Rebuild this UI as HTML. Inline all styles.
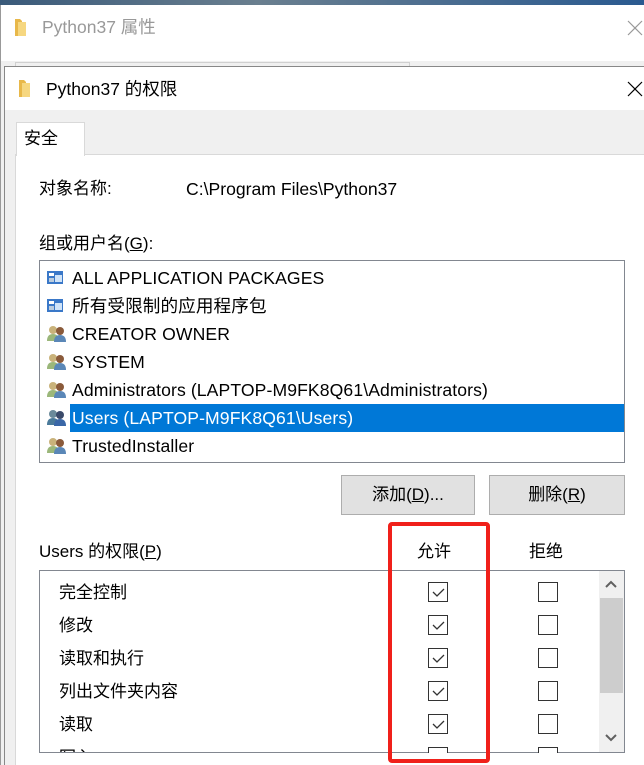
<!DOCTYPE html>
<html><head><meta charset="utf-8"><style>
*{margin:0;padding:0;box-sizing:border-box}
body{width:644px;height:765px;overflow:hidden;background:#f0f0f0;font-family:"Liberation Sans","Noto Sans CJK SC","Microsoft YaHei",sans-serif;position:relative;font-size:17px;color:#000}
.a{position:absolute}
.t{position:absolute;white-space:nowrap;line-height:20px}
.row{position:absolute;left:1px;width:583px;height:28px}
.row span{position:absolute;left:31px;top:4px;line-height:20px;white-space:nowrap;font-size:17.6px;letter-spacing:0.1px}
.cb{position:absolute;width:20px;height:20px;border:1px solid #333;background:#fff}
</style></head><body>
<div class="a" style="left:0;top:0;width:644px;height:5px;background:linear-gradient(90deg,#3a5a7a,#6a7f8f 40%,#2a5a90)"></div>
<div class="a" style="left:0;top:5px;width:644px;height:760px;background:#f0f0f0;border-left:1px solid #999"></div>
<div class="a" style="left:1px;top:5px;width:643px;height:56px;background:#fff"></div>
<svg class="a" style="left:13px;top:16px" width="18" height="22"><path d="M2 3h5l2 2v15H2z" fill="#e8b84a"/><path d="M5 6h8v14H5z" fill="#f6d780"/></svg>
<div class="t" style="left:42px;top:17px;color:#999;font-size:17.5px">Python37 属性</div>
<svg class="a" style="left:624px;top:20px" width="20" height="16"><path d="M4 1l14 14M18 1L4 15" stroke="#999" stroke-width="1.2"/></svg>
<div class="a" style="left:15px;top:62px;width:395px;height:6px;border:1px solid #d0d0d0;border-bottom:none"></div>
<div class="a" style="left:4px;top:66px;width:640px;height:699px;background:#f0f0f0;border:1px solid #888;border-right:none;border-bottom:none"></div>
<div class="a" style="left:5px;top:67px;width:639px;height:43px;background:#fff"></div>
<svg class="a" style="left:17px;top:77px" width="18" height="22"><path d="M2 3h5l2 2v15H2z" fill="#e8b84a"/><path d="M5 6h8v14H5z" fill="#f6d780"/></svg>
<div class="t" style="left:46px;top:79px;font-size:17.5px">Python37 的权限</div>
<svg class="a" style="left:624px;top:81px" width="20" height="16"><path d="M4 1l14 14M18 1L4 15" stroke="#000" stroke-width="1.2"/></svg>
<div class="a" style="left:15px;top:154px;width:629px;height:611px;background:#fff;border-left:1px solid #d9d9d9;border-top:1px solid #d9d9d9"></div>
<div class="a" style="left:16px;top:122px;width:69px;height:34px;background:#fff;border:1px solid #d9d9d9;border-bottom:none"></div>
<div class="t" style="left:24px;top:129px">安全</div>
<div class="t" style="left:39px;top:179px">对象名称:</div>
<div class="t" style="left:186px;top:179px;font-size:17.6px">C:\Program Files\Python37</div>
<div class="t" style="left:39px;top:234px">组或用户名(<u>G</u>):</div>
<div class="a" style="left:39px;top:260px;width:586px;height:203px;border:1px solid #828790;background:#fff">
<div class="row" style="top:3px"><svg class="a" style="left:5px;top:5px" width="20" height="18"><rect x="1" y="2" width="16" height="13" fill="#3a78c8"/><rect x="3" y="4" width="5" height="3" fill="#fff"/><rect x="9" y="6" width="7" height="7" fill="#cfe3f8"/><rect x="3" y="9" width="5" height="4" fill="#bcd"/></svg><span>ALL APPLICATION PACKAGES</span></div>
<div class="row" style="top:31px"><svg class="a" style="left:5px;top:5px" width="20" height="18"><rect x="1" y="2" width="16" height="13" fill="#3a78c8"/><rect x="3" y="4" width="5" height="3" fill="#fff"/><rect x="9" y="6" width="7" height="7" fill="#cfe3f8"/><rect x="3" y="9" width="5" height="4" fill="#bcd"/></svg><span>所有受限制的应用程序包</span></div>
<div class="row" style="top:59px"><svg class="a" style="left:5px;top:5px" width="22" height="18"><circle cx="7" cy="5" r="4" fill="#c9b27a"/><path d="M1 16q0-7 6-7t6 7z" fill="#9bb77a"/><circle cx="14" cy="6" r="4" fill="#8a5a3a"/><path d="M8 17q0-7 6-7t6 7z" fill="#5a87b7"/></svg><span>CREATOR OWNER</span></div>
<div class="row" style="top:87px"><svg class="a" style="left:5px;top:5px" width="22" height="18"><circle cx="7" cy="5" r="4" fill="#c9b27a"/><path d="M1 16q0-7 6-7t6 7z" fill="#9bb77a"/><circle cx="14" cy="6" r="4" fill="#8a5a3a"/><path d="M8 17q0-7 6-7t6 7z" fill="#5a87b7"/></svg><span>SYSTEM</span></div>
<div class="row" style="top:115px"><svg class="a" style="left:5px;top:5px" width="22" height="18"><circle cx="7" cy="5" r="4" fill="#c9b27a"/><path d="M1 16q0-7 6-7t6 7z" fill="#9bb77a"/><circle cx="14" cy="6" r="4" fill="#8a5a3a"/><path d="M8 17q0-7 6-7t6 7z" fill="#5a87b7"/></svg><span>Administrators (LAPTOP-M9FK8Q61\Administrators)</span></div>
<div class="row" style="top:143px"><svg class="a" style="left:5px;top:5px" width="22" height="18"><circle cx="7" cy="5" r="4" fill="#6a8a9a"/><path d="M1 16q0-7 6-7t6 7z" fill="#4a7a9a"/><circle cx="14" cy="6" r="4" fill="#3a4a6a"/><path d="M8 17q0-7 6-7t6 7z" fill="#3a67a7"/></svg><div class="a" style="left:29px;top:0;width:554px;height:28px;background:#0078d7"></div><span style="color:#fff">Users (LAPTOP-M9FK8Q61\Users)</span></div>
<div class="row" style="top:171px"><svg class="a" style="left:5px;top:5px" width="22" height="18"><circle cx="7" cy="5" r="4" fill="#c9b27a"/><path d="M1 16q0-7 6-7t6 7z" fill="#9bb77a"/><circle cx="14" cy="6" r="4" fill="#8a5a3a"/><path d="M8 17q0-7 6-7t6 7z" fill="#5a87b7"/></svg><span>TrustedInstaller</span></div>
</div>
<div class="a" style="left:341px;top:475px;width:134px;height:40px;background:#e1e1e1;border:1px solid #adadad;text-align:center;line-height:38px">添加(<u>D</u>)...</div>
<div class="a" style="left:489px;top:475px;width:136px;height:40px;background:#e1e1e1;border:1px solid #adadad;text-align:center;line-height:38px">删除(<u>R</u>)</div>
<div class="t" style="left:39px;top:542px">Users 的权限(<u>P</u>)</div>
<div class="t" style="left:417px;top:542px">允许</div>
<div class="t" style="left:529px;top:542px">拒绝</div>
<div class="a" style="left:39px;top:570px;width:586px;height:183px;border:1px solid #828790;background:#fff;overflow:hidden">
<div class="t" style="left:19px;top:12px">完全控制</div>
<div class="t" style="left:19px;top:45px">修改</div>
<div class="t" style="left:19px;top:78px">读取和执行</div>
<div class="t" style="left:19px;top:111px">列出文件夹内容</div>
<div class="t" style="left:19px;top:144px">读取</div>
<div class="t" style="left:19px;top:177px">写入</div>
<div class="a" style="left:559px;top:0;width:25px;height:181px;background:#f0f0f0"></div>
<div class="a" style="left:560px;top:27px;width:23px;height:95px;background:#cdcdcd"></div>
<svg class="a" style="left:564px;top:8px" width="14" height="10"><path d="M2 8l5-5 5 5" stroke="#606060" stroke-width="2" fill="none"/></svg>
<svg class="a" style="left:564px;top:162px" width="14" height="10"><path d="M2 2l5 5 5-5" stroke="#606060" stroke-width="2" fill="none"/></svg>
</div>
<div class="cb" style="left:428px;top:582px"></div><div class="cb" style="left:428px;top:615px"></div><div class="cb" style="left:428px;top:648px"></div><div class="cb" style="left:428px;top:681px"></div><div class="cb" style="left:428px;top:714px"></div>
<div class="cb" style="left:428px;top:747px;height:6px;border-bottom:none"></div>
<svg class="a" style="left:428px;top:582px" width="20" height="160"><g stroke="#333" stroke-width="1.3" fill="none"><path d="M5 10l4 4 7-7"/><path d="M5 43l4 4 7-7"/><path d="M5 76l4 4 7-7"/><path d="M5 109l4 4 7-7"/><path d="M5 142l4 4 7-7"/></g></svg>
<div class="cb" style="left:538px;top:582px"></div><div class="cb" style="left:538px;top:615px"></div><div class="cb" style="left:538px;top:648px"></div><div class="cb" style="left:538px;top:681px"></div><div class="cb" style="left:538px;top:714px"></div>
<div class="cb" style="left:538px;top:747px;height:6px;border-bottom:none"></div>
<div class="a" style="left:388px;top:522px;width:102px;height:241px;border:4px solid #f0201a;border-radius:4px"></div>
</body></html>
